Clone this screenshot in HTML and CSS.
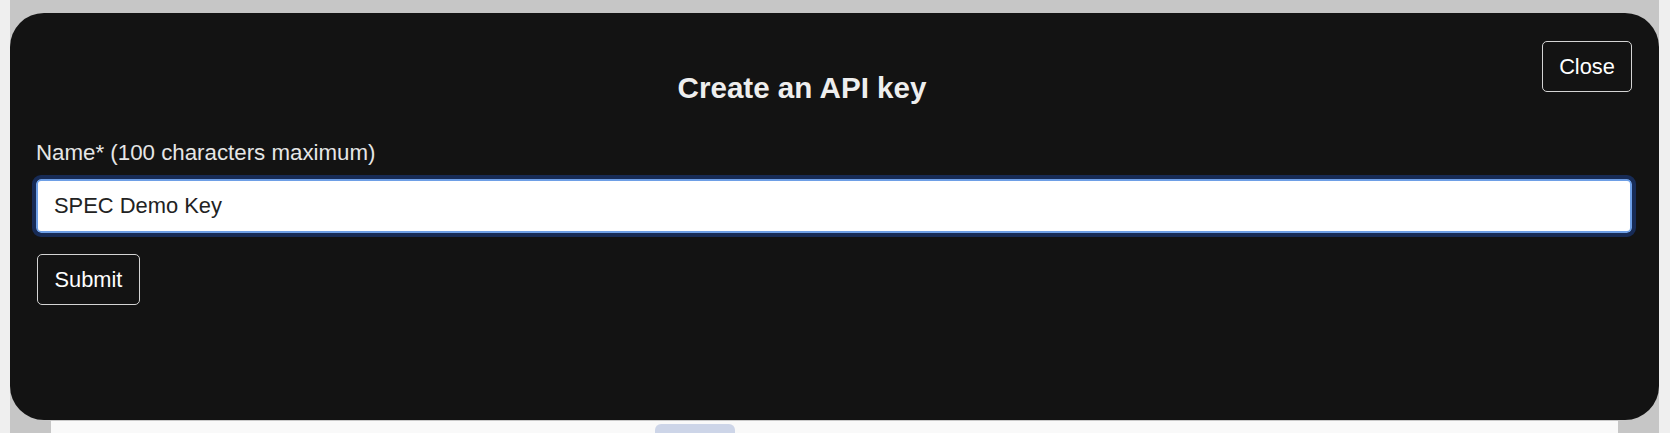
FILE: index.html
```html
<!DOCTYPE html>
<html lang="en">
<head>
<meta charset="utf-8">
<title>Create an API key</title>
<link rel="stylesheet" href="styles.css">
</head>
<body>
<div class="backdrop">
  <div class="dialog" role="dialog" aria-labelledby="dlg-title">
    <div class="dialog-header">
      <h2 class="dialog-title" id="dlg-title">Create an API key</h2>
      <button class="btn btn-close" type="button">Close</button>
    </div>
    <form class="key-form">
      <label class="field-label" for="key-name">Name* (100 characters maximum)</label>
      <input class="field-input" id="key-name" type="text" value="SPEC Demo Key">
      <div class="form-actions">
        <button class="btn btn-submit" type="button">Submit</button>
      </div>
    </form>
  </div>
  <div class="page-peek">
    <div class="peek-chip"></div>
  </div>
</div>
</body>
</html>
```

FILE: styles.css
```css
* { box-sizing: border-box; }

html, body {
  margin: 0;
  padding: 0;
  height: 100%;
}

body {
  background: #efefef;
  font-family: "Liberation Sans", Arial, Helvetica, sans-serif;
  overflow: hidden;
}

.backdrop {
  height: 433px;
  margin: 0 11px 0 10px;
  padding-top: 13px;
  background: #c6c6c6;
  display: flex;
  flex-direction: column;
  overflow: hidden;
}

.dialog {
  flex: none;
  height: 407px;
  background: #131313;
  border-radius: 34px;
  padding: 28px 27px 0 26px;
  color: #e8e8e8;
}

.dialog-header {
  display: grid;
  grid-template-columns: 1fr;
  grid-template-rows: auto;
}

.dialog-title {
  grid-area: 1 / 1;
  margin: 30px 64px 0 0;
  font-size: 29.6px;
  line-height: 34px;
  font-weight: 700;
  text-align: center;
  color: #eeeeee;
}

.btn {
  font-family: inherit;
  font-size: 21.8px;
  line-height: 25px;
  color: #ffffff;
  background: transparent;
  border: 1px solid #d4d4d4;
  border-radius: 5px;
  cursor: pointer;
}

.btn-close {
  grid-area: 1 / 1;
  justify-self: end;
  align-self: start;
  width: 90px;
  height: 51px;
  padding: 0;
}

.key-form {
  display: flex;
  flex-direction: column;
  align-items: flex-start;
  margin-top: 35px;
}

.field-label {
  font-size: 22.3px;
  line-height: 26px;
  color: #e6e6e6;
}

.field-input {
  align-self: stretch;
  margin: 13px 0 0 0;
  height: 54px;
  padding: 0 16px;
  font-family: inherit;
  font-size: 21.9px;
  color: #222222;
  background: #ffffff;
  border: 2px solid #6e9fe6;
  border-radius: 5px;
  outline: 4px solid #172b56;
  outline-offset: 0;
}

.form-actions {
  margin-top: 21px;
  margin-left: 1px;
}

.btn-submit {
  width: 103px;
  height: 51px;
  padding: 0;
}

.page-peek {
  flex: 1;
  margin: 0 41px 0 41px;
  background: #f9f9f9;
  border-top: 1px solid #c9c9c9;
  padding-top: 3px;
  padding-left: 604px;
}

.peek-chip {
  width: 80px;
  height: 20px;
  background: #cdd5e8;
  border-radius: 6px;
}
```
